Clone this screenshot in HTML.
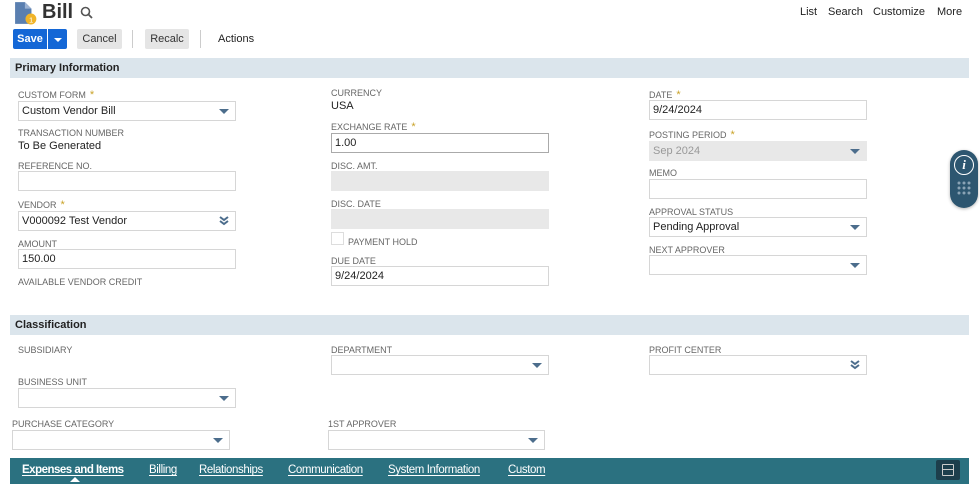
<!DOCTYPE html>
<html><head><style>
*{box-sizing:border-box;margin:0;padding:0}
body{width:980px;height:484px;overflow:hidden;background:#fff;font-family:"Liberation Sans",sans-serif;color:#222;position:relative}
.a{position:absolute;white-space:nowrap}
.l{position:absolute;font-size:9px;color:#666;text-transform:uppercase;white-space:nowrap}
.l b{color:#c9a227;font-weight:normal;font-size:11px;margin-left:4px}
.f{position:absolute;height:20px;border:1px solid #d6d6d6;background:#fff;font-size:11px;padding:3px 0 0 3px;color:#222}
.f.g{background:#e8e8e8;border-color:#e8e8e8;color:#999}
.v{position:absolute;font-size:11px;color:#222}
.dd::after{content:"";position:absolute;right:6px;top:7px;border-left:5px solid transparent;border-right:5px solid transparent;border-top:5px solid #4c6d8c}
.dbl{position:absolute;right:6px;top:4px}
.bar{position:absolute;left:10px;width:959px;height:20px;background:#dbe5ec;font-size:11px;font-weight:bold;padding:4px 0 0 5px;color:#222}
.btn{position:absolute;top:29px;height:20px;font-size:11px;padding-top:4px;text-align:center;border-radius:2px}
.tab{position:absolute;top:464px;font-size:11.5px;letter-spacing:-0.4px;color:#fff;text-decoration:underline;text-underline-offset:2px}
</style></head><body>
<svg class="a" style="left:14px;top:1px" width="24" height="24" viewBox="0 0 22 22"><path d="M1 1h9l6 6v14H1z" fill="#5a7fb0"/><path d="M10 1v6h6z" fill="#9db3d3"/><circle cx="15.5" cy="16.5" r="5" fill="#f0b429"/><text x="13.8" y="19.5" font-size="7" fill="#fff" font-family="Liberation Sans">1</text></svg>
<div class="a" style="left:42px;top:1px;font-size:20px;font-weight:bold;color:#333">Bill</div>
<svg class="a" style="left:80px;top:6px" width="13" height="13" viewBox="0 0 13 13"><circle cx="5.5" cy="5.5" r="4" fill="none" stroke="#555" stroke-width="1.6"/><path d="M8.5 8.5l3.5 3.5" stroke="#555" stroke-width="1.8"/></svg>
<div class="a" style="left:800px;top:6px;font-size:11px">List</div>
<div class="a" style="left:828px;top:6px;font-size:11px">Search</div>
<div class="a" style="left:873px;top:6px;font-size:11px">Customize</div>
<div class="a" style="left:937px;top:6px;font-size:11px">More</div>
<div class="btn" style="left:13px;width:34px;background:#1467d6;color:#fff;font-weight:bold;border-radius:2px 0 0 2px">Save</div>
<div class="btn" style="left:48px;width:19px;background:#1467d6;border-radius:0 2px 2px 0"><div style="margin:5px auto 0;width:0;border-left:4px solid transparent;border-right:4px solid transparent;border-top:4px solid #fff"></div></div>
<div class="btn" style="left:77px;width:45px;background:#e5e5e5;color:#333">Cancel</div>
<div class="a" style="left:132px;top:30px;width:1px;height:18px;background:#ccc"></div>
<div class="btn" style="left:145px;width:44px;background:#e5e5e5;color:#333">Recalc</div>
<div class="a" style="left:200px;top:30px;width:1px;height:18px;background:#ccc"></div>
<div class="a" style="left:218px;top:33px;font-size:11px">Actions</div>

<div class="bar" style="top:58px">Primary Information</div>

<div class="l" style="left:18px;top:89px">Custom Form<b>*</b></div>
<div class="f dd" style="left:18px;top:101px;width:218px">Custom Vendor Bill</div>
<div class="l" style="left:18px;top:128px">Transaction Number</div>
<div class="v" style="left:18px;top:140px">To Be Generated</div>
<div class="l" style="left:18px;top:161px">Reference No.</div>
<div class="f" style="left:18px;top:171px;width:218px"></div>
<div class="l" style="left:18px;top:199px">Vendor<b>*</b></div>
<div class="f" style="left:18px;top:211px;width:218px">V000092 Test Vendor<svg class="dbl" width="10" height="10" viewBox="0 0 10 10"><path d="M1 1l4 3 4-3M1 5l4 3 4-3" fill="none" stroke="#4c6d8c" stroke-width="2"/></svg></div>
<div class="l" style="left:18px;top:239px">Amount</div>
<div class="f" style="left:18px;top:249px;width:218px">150.00</div>
<div class="l" style="left:18px;top:277px">Available Vendor Credit</div>

<div class="l" style="left:331px;top:88px">Currency</div>
<div class="v" style="left:331px;top:100px">USA</div>
<div class="l" style="left:331px;top:121px">Exchange Rate<b>*</b></div>
<div class="f" style="left:331px;top:133px;width:218px;border-color:#aaa">1.00</div>
<div class="l" style="left:331px;top:161px">Disc. Amt.</div>
<div class="f g" style="left:331px;top:171px;width:218px"></div>
<div class="l" style="left:331px;top:199px">Disc. Date</div>
<div class="f g" style="left:331px;top:209px;width:218px"></div>
<div class="a" style="left:331px;top:232px;width:13px;height:13px;border:1px solid #ddd"></div>
<div class="l" style="left:348px;top:237px">Payment Hold</div>
<div class="l" style="left:331px;top:256px">Due Date</div>
<div class="f" style="left:331px;top:266px;width:218px">9/24/2024</div>

<div class="l" style="left:649px;top:89px">Date<b>*</b></div>
<div class="f" style="left:649px;top:100px;width:218px">9/24/2024</div>
<div class="l" style="left:649px;top:129px">Posting Period<b>*</b></div>
<div class="f g dd" style="left:649px;top:141px;width:218px">Sep 2024</div>
<div class="l" style="left:649px;top:168px">Memo</div>
<div class="f" style="left:649px;top:179px;width:218px"></div>
<div class="l" style="left:649px;top:207px">Approval Status</div>
<div class="f dd" style="left:649px;top:217px;width:218px">Pending Approval</div>
<div class="l" style="left:649px;top:245px">Next Approver</div>
<div class="f dd" style="left:649px;top:255px;width:218px"></div>

<div class="bar" style="top:315px">Classification</div>
<div class="l" style="left:18px;top:345px">Subsidiary</div>
<div class="l" style="left:331px;top:345px">Department</div>
<div class="f dd" style="left:331px;top:355px;width:218px"></div>
<div class="l" style="left:649px;top:345px">Profit Center</div>
<div class="f" style="left:649px;top:355px;width:218px"><svg class="dbl" width="10" height="10" viewBox="0 0 10 10"><path d="M1 1l4 3 4-3M1 5l4 3 4-3" fill="none" stroke="#4c6d8c" stroke-width="2"/></svg></div>
<div class="l" style="left:18px;top:377px">Business Unit</div>
<div class="f dd" style="left:18px;top:388px;width:218px"></div>
<div class="l" style="left:12px;top:419px">Purchase Category</div>
<div class="f dd" style="left:12px;top:430px;width:218px"></div>
<div class="l" style="left:328px;top:419px">1st Approver</div>
<div class="f dd" style="left:328px;top:430px;width:217px"></div>

<div class="a" style="left:10px;top:458px;width:959px;height:26px;background:#2b7180"></div>
<div class="tab" style="left:22px;font-weight:bold;letter-spacing:-0.5px">Expenses and Items</div>
<div class="a" style="left:70px;top:477px;width:0;border-left:5px solid transparent;border-right:5px solid transparent;border-bottom:5px solid #fff"></div>
<div class="tab" style="left:149px">Billing</div>
<div class="tab" style="left:199px">Relationships</div>
<div class="tab" style="left:288px">Communication</div>
<div class="tab" style="left:388px">System Information</div>
<div class="tab" style="left:508px">Custom</div>
<div class="a" style="left:936px;top:460px;width:24px;height:20px;background:#1d3e4c;border-radius:2px"><div style="margin:4px 6px;width:12px;height:12px;border:1.5px solid #ccc;border-radius:1px;position:relative"><div style="position:absolute;left:0;right:0;top:4px;border-top:1.5px solid #ccc"></div></div></div>

<div class="a" style="left:950px;top:150px;width:28px;height:58px;background:#2d5670;border-radius:14px;box-shadow:0 1px 3px rgba(0,0,0,.3)">
<div style="margin:5px 0 0 4px;width:20px;height:20px;border:1.5px solid #fff;border-radius:50%;color:#fff;font:italic bold 13px 'Liberation Serif',serif;text-align:center;line-height:17px">i</div>
<svg style="position:absolute;left:7px;top:31px" width="14" height="14"><g fill="#8aa3b5"><circle cx="2" cy="2" r="1.5"/><circle cx="7" cy="2" r="1.5"/><circle cx="12" cy="2" r="1.5"/><circle cx="2" cy="7" r="1.5"/><circle cx="7" cy="7" r="1.5"/><circle cx="12" cy="7" r="1.5"/><circle cx="2" cy="12" r="1.5"/><circle cx="7" cy="12" r="1.5"/><circle cx="12" cy="12" r="1.5"/></g></svg>
</div>
</body></html>
